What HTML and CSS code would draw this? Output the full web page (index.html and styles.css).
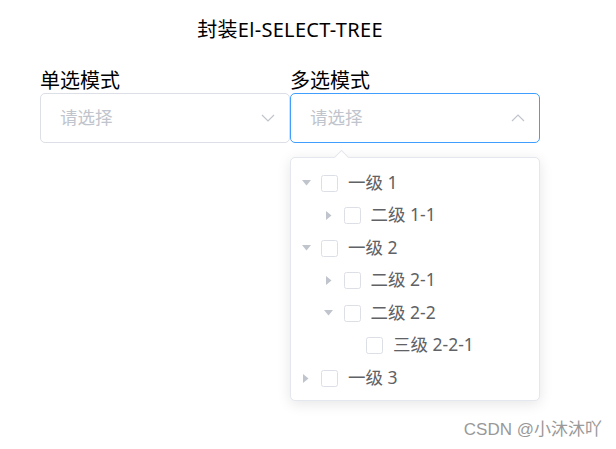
FILE: index.html
```html
<!DOCTYPE html>
<html lang="zh-CN">
<head>
<meta charset="utf-8">
<title>封装El-SELECT-TREE</title>
<link rel="stylesheet" href="styles.css">
</head>
<body>
<div class="page">
  <h1 class="title">封装El-SELECT-TREE</h1>
  <div class="fields">
    <div class="field">
      <div class="label">单选模式</div>
      <div class="select">
        <span class="placeholder">请选择</span>
        <svg class="chev" width="14" height="8" viewBox="0 0 14 8"><polyline points="1,1 7,7 13,1" fill="none" stroke="#c0c4cc" stroke-width="1.2"/></svg>
      </div>
    </div>
    <div class="field">
      <div class="label">多选模式</div>
      <div class="select is-focus">
        <span class="placeholder">请选择</span>
        <svg class="chev" width="14" height="8" viewBox="0 0 14 8"><polyline points="1,7 7,1 13,7" fill="none" stroke="#c0c4cc" stroke-width="1.2"/></svg>
      </div>
      <div class="dropdown">
        <span class="arrow"></span>
        <ul class="tree">
          <li class="node lv1"><span class="caret"><svg width="9" height="6" viewBox="0 0 9 6"><polygon points="0,0 9,0 4.5,5.5" fill="#c0c4cc"/></svg></span><span class="check"></span><span class="text">一级 1</span></li>
          <li class="node lv2"><span class="caret"><svg width="6" height="9" viewBox="0 0 6 9"><polygon points="0,0 5.5,4.5 0,9" fill="#c0c4cc"/></svg></span><span class="check"></span><span class="text">二级 1-1</span></li>
          <li class="node lv1"><span class="caret"><svg width="9" height="6" viewBox="0 0 9 6"><polygon points="0,0 9,0 4.5,5.5" fill="#c0c4cc"/></svg></span><span class="check"></span><span class="text">一级 2</span></li>
          <li class="node lv2"><span class="caret"><svg width="6" height="9" viewBox="0 0 6 9"><polygon points="0,0 5.5,4.5 0,9" fill="#c0c4cc"/></svg></span><span class="check"></span><span class="text">二级 2-1</span></li>
          <li class="node lv2"><span class="caret"><svg width="9" height="6" viewBox="0 0 9 6"><polygon points="0,0 9,0 4.5,5.5" fill="#c0c4cc"/></svg></span><span class="check"></span><span class="text">二级 2-2</span></li>
          <li class="node lv3"><span class="caret"></span><span class="check"></span><span class="text">三级 2-2-1</span></li>
          <li class="node lv1"><span class="caret"><svg width="6" height="9" viewBox="0 0 6 9"><polygon points="0,0 5.5,4.5 0,9" fill="#c0c4cc"/></svg></span><span class="check"></span><span class="text">一级 3</span></li>
        </ul>
      </div>
    </div>
  </div>
</div>
<div class="watermark">CSDN @小沐沐吖</div>
</body>
</html>
```

FILE: styles.css
```css
html, body {
  margin: 0;
  padding: 0;
  background: #fff;
}
body {
  font-family: "Noto Sans", "Noto Sans CJK SC", sans-serif;
  color: #000;
  width: 616px;
  height: 449px;
  overflow: hidden;
  position: relative;
}
.page {
  width: 500px;
  margin-left: 40px;
}
.title {
  margin: 0;
  padding-top: 17px;
  font-size: 20px;
  font-weight: normal;
  line-height: 26px;
  letter-spacing: 0.3px;
  text-align: center;
}
.fields {
  display: flex;
  margin-top: 26px;
}
.field {
  width: 250px;
  position: relative;
}
.label {
  font-size: 20px;
  line-height: 24px;
  height: 24px;
}
.select {
  box-sizing: border-box;
  height: 50px;
  border: 1px solid #dcdfe6;
  border-radius: 5px;
  display: flex;
  align-items: center;
  padding: 0 14px 0 19px;
}
.select.is-focus {
  border-color: #409eff;
}
.placeholder {
  flex: 1;
  font-size: 17.5px;
  line-height: 24px;
  padding-bottom: 3px;
  color: #c0c4cc;
}
.chev {
  display: block;
}
.dropdown {
  position: absolute;
  top: 88px;
  left: 0;
  width: 250px;
  box-sizing: border-box;
  border: 1px solid #e4e7ed;
  border-radius: 5px;
  background: #fff;
  box-shadow: 0 3px 14px rgba(0, 0, 0, 0.1);
  padding: 8.75px 0 5.75px;
}
.arrow {
  position: absolute;
  top: -6px;
  left: 45px;
  width: 10px;
  height: 10px;
  background: #fff;
  border-top: 1px solid #e4e7ed;
  border-left: 1px solid #e4e7ed;
  transform: rotate(45deg);
}
.tree {
  list-style: none;
  margin: 0;
  padding: 0;
}
.node {
  display: flex;
  align-items: center;
  height: 32.5px;
  font-size: 17.5px;
  color: #606266;
}
.lv2 { padding-left: 22.5px; }
.lv3 { padding-left: 45px; }
.caret {
  width: 30px;
  display: flex;
  justify-content: center;
  align-items: center;
}
.caret svg { display: block; }
.check {
  box-sizing: border-box;
  width: 17px;
  height: 17px;
  border: 1px solid #dcdfe6;
  border-radius: 2.5px;
  background: #fff;
  margin-right: 10px;
}
.text {
  line-height: 24px;
  padding-bottom: 3px;
}
.watermark {
  position: absolute;
  right: 14px;
  top: 419px;
  font-family: "Liberation Sans", "Noto Sans CJK SC", sans-serif;
  font-size: 17px;
  line-height: 22px;
  color: #999;
}
```
